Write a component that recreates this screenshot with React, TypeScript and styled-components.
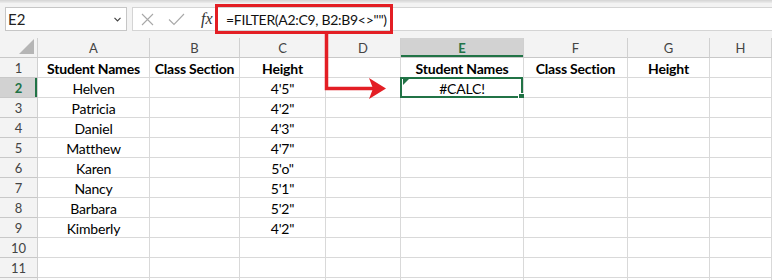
import React from "react";
import styled, { createGlobalStyle } from "styled-components";

const GlobalStyle = createGlobalStyle`
  html, body { margin: 0; padding: 0; background: #fff; }
  body { font-family: Lato, "Open Sans", sans-serif; }
`;

const GREEN = "#217346";
const RED = "#e31e24";

const Page = styled.div`
  position: relative;
  width: 772px;
  height: 280px;
  overflow: hidden;
  background: #f3f3f3;
  display: flex;
  flex-direction: column;
`;

const TopStrip = styled.div`
  flex-shrink: 0;
  height: 3px;
  background: linear-gradient(#d4d4d4, #ececec);
`;

const FormulaRow = styled.div`
  flex-shrink: 0;
  height: 35px;
  box-sizing: border-box;
  padding: 4px 0 7px 5px;
  display: flex;
`;

const NameBox = styled.div`
  width: 122px;
  box-sizing: border-box;
  background: #fff;
  border: 1px solid #c6c6c6;
  display: flex;
  align-items: center;
  justify-content: space-between;
  padding: 0 5px 0 2px;
  font-size: 15px;
  color: #222;
`;

const FormulaBox = styled.div`
  flex: 1;
  margin-left: 5px;
  box-sizing: border-box;
  background: #fff;
  border: 1px solid #d4d4d4;
  border-right: none;
  display: flex;
  align-items: center;
`;

const IconArea = styled.div`
  width: 82px;
  display: flex;
  align-items: center;
  padding-left: 8px;
  gap: 14px;
  box-sizing: border-box;
`;

const Fx = styled.span`
  font-family: "Liberation Serif", serif;
  font-style: italic;
  font-size: 16px;
  color: #333;
  margin-left: 2px;
`;

const FormulaText = styled.div`
  flex: 1;
  padding-left: 11px;
  font-size: 14px;
  letter-spacing: -0.3px;
  color: #111;
  white-space: nowrap;
`;

const Sheet = styled.div`
  flex-shrink: 0;
  display: grid;
  grid-template-columns: 38px 112px 90px 86px 75px 123px 104px 82px 62px;
  grid-auto-rows: 20px;
  background: #fff;
`;

type CellKind = "corner" | "colHead" | "rowHead" | "data";

const Cell = styled.div<{
  $kind: CellKind;
  $active?: boolean;
  $bold?: boolean;
}>`
  position: relative;
  box-sizing: border-box;
  border-right: 1px solid ${(p) => (p.$kind === "data" ? "#d9d9d9" : "#d0d0d0")};
  border-bottom: 1px solid ${(p) => (p.$kind === "data" ? "#d9d9d9" : "#c8c8c8")};
  display: flex;
  align-items: center;
  justify-content: center;
  white-space: nowrap;
  background: ${(p) => (p.$kind === "data" ? "#fff" : p.$active ? "#d2d2d2" : "#f3f3f3")};
  font-size: ${(p) => (p.$kind === "data" ? "14px" : "13px")};
  letter-spacing: ${(p) => (p.$kind === "data" ? "-0.2px" : "0")};
  font-weight: ${(p) => (p.$bold || p.$active ? 700 : 400)};
  color: ${(p) => (p.$kind === "data" ? "#000" : p.$active ? GREEN : "#444")};
  box-shadow: ${(p) =>
    p.$active && p.$kind === "colHead"
      ? `inset 0 -2px 0 ${GREEN}`
      : p.$active && p.$kind === "rowHead"
      ? `inset -2px 0 0 ${GREEN}`
      : "none"};
  padding-top: ${(p) => (p.$kind === "data" ? "1px" : "0")};
`;

const CornerTriangle = styled.div`
  position: absolute;
  right: 3px;
  bottom: 3px;
  width: 0;
  height: 0;
  border-left: 15px solid transparent;
  border-bottom: 15px solid #b5b5b5;
`;

const Selection = styled.div`
  position: absolute;
  left: -1px;
  top: -1px;
  right: 0;
  bottom: -1px;
  border: 2px solid ${GREEN};
  pointer-events: none;
`;

const FillHandle = styled.div`
  position: absolute;
  right: -3px;
  bottom: -3px;
  width: 5px;
  height: 5px;
  background: ${GREEN};
  outline: 1px solid #fff;
`;

const ErrorFlag = styled.div`
  position: absolute;
  left: 2px;
  top: 1px;
  width: 0;
  height: 0;
  border-top: 6px solid ${GREEN};
  border-right: 6px solid transparent;
`;

const Overlay = styled.svg`
  position: absolute;
  left: 0;
  top: 0;
  pointer-events: none;
`;

const COLS = ["A", "B", "C", "D", "E", "F", "G", "H"];

const header = ["Student Names", "Class Section", "Height", "", "Student Names", "Class Section", "Height", ""];
const students: [string, string][] = [
  ["Helven", "4'5\""],
  ["Patricia", "4'2\""],
  ["Daniel", "4'3\""],
  ["Matthew", "4'7\""],
  ["Karen", "5'o\""],
  ["Nancy", "5'1\""],
  ["Barbara", "5'2\""],
  ["Kimberly", "4'2\""],
];

const empty = ["", "", "", "", "", "", "", ""];
const rows: string[][] = [
  header,
  ...students.map(([n, h], i) => [n, "", h, "", i === 0 ? "#CALC!" : "", "", "", ""]),
  empty,
  empty,
  empty,
];

const XIcon = () => (
  <svg width="13" height="13" viewBox="0 0 13 13">
    <path d="M1 1 L12 12 M12 1 L1 12" stroke="#a8a8a8" strokeWidth="1.1" fill="none" />
  </svg>
);

const CheckIcon = () => (
  <svg width="17" height="13" viewBox="0 0 17 13">
    <path d="M1 6.5 L6 11.5 L16 1" stroke="#a8a8a8" strokeWidth="1.1" fill="none" />
  </svg>
);

const Chevron = () => (
  <svg width="7" height="5" viewBox="0 0 7 5">
    <path d="M0.5 0.8 L3.5 3.8 L6.5 0.8" stroke="#444" strokeWidth="1.2" fill="none" />
  </svg>
);

export default function App() {
  return (
    <>
      <GlobalStyle />
      <Page>
        <TopStrip />
        <FormulaRow>
          <NameBox>
            <span>E2</span>
            <Chevron />
          </NameBox>
          <FormulaBox>
            <IconArea>
              <XIcon />
              <CheckIcon />
              <Fx>fx</Fx>
            </IconArea>
            <FormulaText>=FILTER(A2:C9, B2:B9&lt;&gt;"")</FormulaText>
          </FormulaBox>
        </FormulaRow>
        <Sheet>
          <Cell $kind="corner">
            <CornerTriangle />
          </Cell>
          {COLS.map((c) => (
            <Cell key={c} $kind="colHead" $active={c === "E"}>
              {c}
            </Cell>
          ))}
          {rows.map((r, ri) => (
            <React.Fragment key={ri}>
              <Cell $kind="rowHead" $active={ri === 1}>
                {ri < 11 ? ri + 1 : ""}
              </Cell>
              {r.map((v, ci) => (
                <Cell key={ci} $kind="data" $bold={ri === 0}>
                  {ri === 1 && ci === 4 && (
                    <>
                      <ErrorFlag />
                      <Selection>
                        <FillHandle />
                      </Selection>
                    </>
                  )}
                  {v}
                </Cell>
              ))}
            </React.Fragment>
          ))}
        </Sheet>
        <Overlay width="772" height="280">
          <rect x="216.5" y="5.5" width="175" height="27" fill="none" stroke={RED} strokeWidth="3" />
          <path d="M326.5 33 L326.5 88.5 L373 88.5" fill="none" stroke={RED} strokeWidth="3.5" />
          <path d="M369 78 L386 88.5 L369 99 L373 88.5 Z" fill={RED} />
        </Overlay>
      </Page>
    </>
  );
}
